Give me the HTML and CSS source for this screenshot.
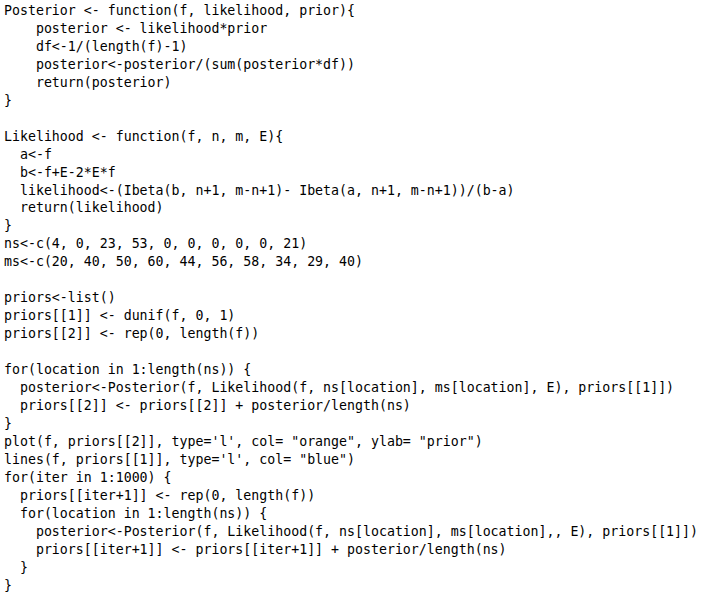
FILE: index.html
```html
<!DOCTYPE html>
<html>
<head>
<meta charset="utf-8">
<link rel="stylesheet" href="styles.css">
</head>
<body>
<pre class="code">Posterior &lt;- function(f, likelihood, prior){
    posterior &lt;- likelihood*prior
    df&lt;-1/(length(f)-1)
    posterior&lt;-posterior/(sum(posterior*df))
    return(posterior)
}

Likelihood &lt;- function(f, n, m, E){
  a&lt;-f
  b&lt;-f+E-2*E*f
  likelihood&lt;-(Ibeta(b, n+1, m-n+1)- Ibeta(a, n+1, m-n+1))/(b-a)
  return(likelihood)
}
ns&lt;-c(4, 0, 23, 53, 0, 0, 0, 0, 0, 21)
ms&lt;-c(20, 40, 50, 60, 44, 56, 58, 34, 29, 40)

priors&lt;-list()
priors[[1]] &lt;- dunif(f, 0, 1)
priors[[2]] &lt;- rep(0, length(f))

for(location in 1:length(ns)) {
  posterior&lt;-Posterior(f, Likelihood(f, ns[location], ms[location], E), priors[[1]])
  priors[[2]] &lt;- priors[[2]] + posterior/length(ns)
}
plot(f, priors[[2]], type='l', col= "orange", ylab= "prior")
lines(f, priors[[1]], type='l', col= "blue")
for(iter in 1:1000) {
  priors[[iter+1]] &lt;- rep(0, length(f))
  for(location in 1:length(ns)) {
    posterior&lt;-Posterior(f, Likelihood(f, ns[location], ms[location],, E), priors[[1]])
    priors[[iter+1]] &lt;- priors[[iter+1]] + posterior/length(ns)
  }
}</pre>
</body>
</html>
```
FILE: styles.css
```css
html, body {
  margin: 0;
  padding: 0;
  background: #ffffff;
}
.code {
  margin: 0;
  padding: 2px 0 0 4px;
  font-family: "DejaVu Sans Mono", monospace;
  font-size: 13.25px;
  line-height: 17.95px;
  color: #000000;
  white-space: pre;
}
```
